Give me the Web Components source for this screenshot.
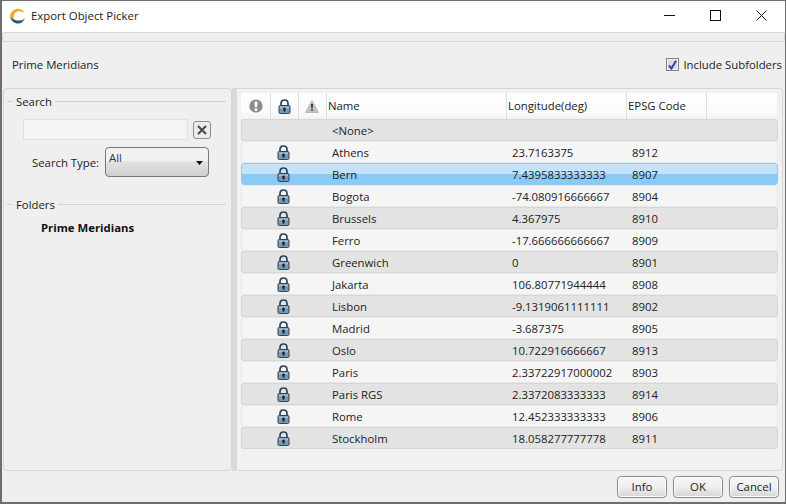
<!DOCTYPE html>
<html><head><meta charset="utf-8"><style>
html,body{margin:0;padding:0;background:#efefef}
body{font:11.4px "Open Sans","Noto Sans",sans-serif;color:#222;width:786px;height:504px;overflow:hidden}
</style></head><body>
<app-window></app-window>
<script>
const FONT='"Open Sans","Noto Sans",sans-serif';
const FS='11.35px';
class Base extends HTMLElement{
  render(html){const s=this.shadowRoot||this.attachShadow({mode:'open'});s.innerHTML=html;}
}
class LockIcon extends Base{connectedCallback(){this.render(`<style>:host{display:inline-flex;width:13px;height:15px}svg{display:block}</style>
<svg width="13" height="15" viewBox="0 0 13 15"><path d="M3 7V4.6C3 2.5 4.5 1 6.5 1S10 2.5 10 4.6V7" fill="none" stroke="#2c4459" stroke-width="1.7"/><rect x="1" y="6.5" width="11" height="8" rx="1.3" fill="#7a98af" stroke="#2c4459"/><rect x="2" y="7.5" width="9" height="1.8" fill="#aac1d2"/><circle cx="6.5" cy="10" r="1.4" fill="#14263a"/><rect x="5.6" y="10" width="1.8" height="2.6" fill="#14263a"/></svg>`);}}
class ErrorIcon extends Base{connectedCallback(){this.render(`<style>:host{display:inline-flex}svg{display:block}</style>
<svg width="14" height="14" viewBox="0 0 14 14"><circle cx="7" cy="7" r="6.6" fill="#8c8c8c"/><rect x="5.6" y="2.6" width="2.8" height="5.6" rx="1" fill="#fff"/><circle cx="7" cy="10.4" r="1.5" fill="#fff"/></svg>`);}}
class WarnIcon extends Base{connectedCallback(){this.render(`<style>:host{display:inline-flex}svg{display:block}</style>
<svg width="14" height="13" viewBox="0 0 14 13"><path d="M7 .8 13.4 12.4H.6Z" fill="#c4c4c4" stroke="#aaa" stroke-width=".8"/><path d="M6 4h2l-.4 4.6H6.4Z" fill="#333"/><rect x="6.2" y="9.4" width="1.6" height="1.6" fill="#333"/></svg>`);}}
class AppLogo extends Base{connectedCallback(){this.render(`<style>:host{display:inline-flex}svg{display:block}</style>
<svg width="16" height="16" viewBox="0 0 16 16"><path d="M14.5 5C13 1.5 9 .2 5.5 1.2 2 2.3 0 5.5.3 9 1.5 10.5 3 11 4 11 3.2 8 4 5 6.5 3.8 9 2.8 12.5 3.5 14.5 5Z" fill="#f0a91e"/><path d="M4 11C6.5 12.6 11 12.6 15 10.3 12 13 8 13.2 5 12 3 11.2 1.2 10.2.3 9 1.5 10.5 3 11 4 11Z" fill="#f4c05a"/><path d="M.3 9C1 13 4.5 15.5 8 15.5 11 15.5 13.5 13.5 15 10.5 12 12.8 8 13.2 5 12 3 11.2 1.2 10.2.3 9Z" fill="#28557f"/></svg>`);}}
class TitleBar extends Base{connectedCallback(){this.render(`<style>
:host{display:flex;align-items:center;height:31px;background:#fff;flex:none;font:11.4px ${FONT};color:#1c1c1c}
.logo{margin-left:8px;margin-top:-1px;display:flex}
.t{margin-left:5px;flex:1;margin-top:-3px}
.b{width:46px;height:31px;display:flex;align-items:center;justify-content:center}
.b svg{margin-top:-2px}
.last{margin-right:1px}
svg{display:block}
</style><span class="logo"><app-logo></app-logo></span><span class="t"><slot></slot></span>
<span class="b"><svg width="11" height="11"><path d="M0 5.5H11" stroke="#111" fill="none"/></svg></span>
<span class="b"><svg width="11" height="11"><rect x=".5" y=".5" width="10" height="10" stroke="#111" fill="none"/></svg></span>
<span class="b last"><svg width="11" height="11"><path d="M.5.5 10.5 10.5M10.5.5.5 10.5" stroke="#111" fill="none"/></svg></span>`);}}
class GroupBox extends Base{connectedCallback(){this.render(`<style>
:host{display:block}
.h{display:flex;align-items:center;height:16px;padding:0 5px 0 3px;gap:3px;color:#222}
.h i{height:1px;background:#d4d4d4;display:block}
.h i.a{width:6px}.h i.b{flex:1}
</style><div class="h"><i class="a"></i><span>${this.getAttribute('label')}</span><i class="b"></i></div><slot></slot>`);}}
class PushButton extends Base{connectedCallback(){this.render(`<style>
:host{display:inline-flex;align-items:center;justify-content:center;width:50px;height:22px;box-sizing:border-box;border:1px solid #8a8a8a;border-radius:4px;background:linear-gradient(#f6f6f6,#f0f0f0 45%,#d6d6d6);box-shadow:inset 0 0 0 1px #fbfbfb;font:${FS} ${FONT};color:#222}
</style><slot></slot>`);}}
class SearchPanel extends Base{connectedCallback(){this.render(`<style>
:host{display:block;width:229px;box-sizing:border-box;border:1px solid #d6d6d6;border-radius:4px;padding-top:4px;font:${FS} ${FONT};color:#222;flex:none}
.r1{display:flex;align-items:center;margin:10px 0 0 19px;gap:5px}
.inp{width:165px;height:21px;box-sizing:border-box;background:#f4f4f4;border:1px solid #e2e2e2}
.x{width:18px;height:18px;box-sizing:border-box;border:1px solid #8d8d8d;border-radius:3px;background:#ececec;display:flex;align-items:center;justify-content:center}
.r2{display:flex;align-items:center;margin:7px 0 0 28px}
.r2>span{width:73px;white-space:nowrap}
.sel{width:104px;height:30px;box-sizing:border-box;border:1px solid #777;border-radius:4px;background:linear-gradient(#f1f1f1,#f1f1f1 45%,#e2e2e2 50%,#cfcfcf);display:flex;justify-content:space-between;padding:2px 5px 0 3px;line-height:16px;color:#333}
.sel svg{margin-top:11px}
.fold{margin-top:19px}
.pm{font-weight:700;margin:8px 0 0 37px;line-height:16px;color:#111}
</style>
<group-box label="Search">
<div class="r1"><div class="inp"></div><div class="x"><svg width="10" height="10"><path d="M1 1 9 9M9 1 1 9" stroke="#3f4a52" stroke-width="2" fill="none"/></svg></div></div>
<div class="r2"><span>Search Type:</span><div class="sel"><span>All</span><svg width="7" height="4"><path d="M0 0H7L3.5 4Z" fill="#111"/></svg></div></div>
</group-box>
<group-box class="fold" label="Folders"><div class="pm">Prime Meridians</div></group-box>`);}}
const COLS='29px 28px 28px 180px 120px 80px 72px';
const HEADCOLS='30px 28px 28px 180px 120px 80px 70px';
class ObjectTable extends Base{connectedCallback(){
const rows=[['<None>','',''],['Athens','23.7163375','8912'],['Bern','7.4395833333333','8907'],['Bogota','-74.080916666667','8904'],['Brussels','4.367975','8910'],['Ferro','-17.666666666667','8909'],['Greenwich','0','8901'],['Jakarta','106.80771944444','8908'],['Lisbon','-9.1319061111111','8902'],['Madrid','-3.687375','8905'],['Oslo','10.722916666667','8913'],['Paris','2.33722917000002','8903'],['Paris RGS','2.3372083333333','8914'],['Rome','12.452333333333','8906'],['Stockholm','18.058277777778','8911']];
const esc=s=>s.replace(/</g,'&lt;').replace(/>/g,'&gt;');
const body=rows.map((r,i)=>{const cls=i==2?'row sel':(i%2==0?'row even':'row odd');
return `<div class="${cls}"><span></span><span class="ic">${i?'<lock-icon></lock-icon>':''}</span><span></span><span class="n">${esc(r[0])}</span><span class="n">${r[1]}</span><span class="n">${r[2]}</span><span></span></div>`}).join('');
this.render(`<style>
:host{display:block;font:${FS} ${FONT};color:#222}
.head,.row{display:grid;grid-template-columns:${COLS};align-items:center}
.head{grid-template-columns:${HEADCOLS};height:26px;width:536px;background:linear-gradient(#fff,#fbfbfb 70%,#f2f2f2)}
.head>span{height:100%;box-sizing:border-box;border-right:1px solid #dedede;display:flex;align-items:center;justify-content:center}
.head>span.t{justify-content:flex-start;padding-left:1px;padding-bottom:2px}
.head>span:last-child{border-right:none}
.w{margin-left:-2px;display:flex}
.row{height:22px;box-sizing:border-box;border:1px solid #e4e4e4;border-radius:3px;width:537px}
.even{background:#e3e3e3;border-color:#d6d6d6}
.odd{background:#f5f5f5;border-color:#e9e9e9}
.sel{background:linear-gradient(#c4e3fa,#c4e3fa 50%,#8bcaf4 50%,#8bcaf4);border-color:#92c8ee}
.ic{display:flex;justify-content:center;padding-right:4px}
.n{padding-left:5px;margin-left:0;white-space:nowrap}
</style>
<div class="head"><span><error-icon></error-icon></span><span><lock-icon></lock-icon></span><span><span class="w"><warn-icon></warn-icon></span></span><span class="t">Name</span><span class="t">Longitude(deg)</span><span class="t">EPSG Code</span><span></span></div>
${body}`);
}}
class AppWindow extends Base{connectedCallback(){this.render(`<style>
:host{display:flex;flex-direction:column;width:786px;height:504px;box-sizing:border-box;border:1px solid #6e6e6e;border-left-width:2px;border-bottom-width:2px;background:#efefef;font:${FS} ${FONT};color:#222}
.strip{height:10px;flex:none;box-sizing:border-box;border:1px solid #d6d6d6;border-radius:3px;background:#eeeeee}
.top{height:46px;flex:none;display:flex;align-items:center;justify-content:space-between;padding:0 3px 0 10px}
.top>span{margin-top:-1px}
.cb{display:flex;align-items:center;gap:4px}
.box{width:13px;height:13px;box-sizing:border-box;border:1px solid #808080;background:#d9d9ec;display:flex;align-items:center;justify-content:center;box-shadow:inset 0 0 0 1px #f1f1f6}
.main{flex:1;display:flex;min-height:0;padding-left:1px}
.split{width:5px;background:#d9d9d9;flex:none}
.right{flex:1;box-sizing:border-box;padding:4px 0 0 4px;border:1px solid #d6d6d6;border-left:none;border-radius:0 4px 4px 0;margin-right:2px;background:#f1f1f1}
.foot{height:31px;flex:none;display:flex;align-items:center;justify-content:flex-end;gap:6px;padding:0 6px 0 0}
</style>
<title-bar>Export Object Picker</title-bar>
<div class="strip"></div>
<div class="top"><span>Prime Meridians</span><span class="cb"><span class="box"><svg width="9" height="10"><path d="M1 5.5 3.5 8.5 8 .8" stroke="#3c3f9a" stroke-width="2" fill="none"/></svg></span><span>Include Subfolders</span></span></div>
<div class="main"><search-panel></search-panel><div class="split"></div><div class="right"><object-table></object-table></div></div>
<div class="foot"><push-button>Info</push-button><push-button>OK</push-button><push-button>Cancel</push-button></div>`);}}
[['lock-icon',LockIcon],['error-icon',ErrorIcon],['warn-icon',WarnIcon],['app-logo',AppLogo],['title-bar',TitleBar],['group-box',GroupBox],['push-button',PushButton],['search-panel',SearchPanel],['object-table',ObjectTable],['app-window',AppWindow]].forEach(([n,c])=>customElements.define(n,c));
</script></body></html>
